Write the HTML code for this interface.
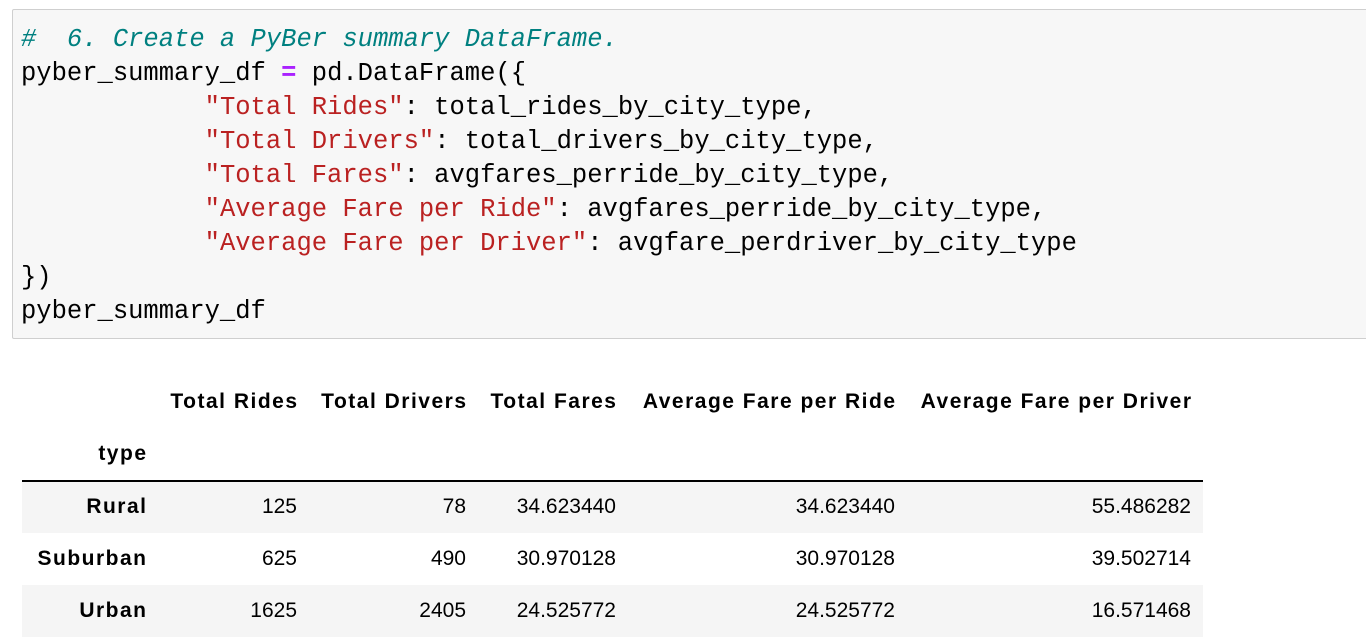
<!DOCTYPE html>
<html><head><meta charset="utf-8"><style>
body{margin:0;background:#fff;width:1366px;height:642px;overflow:hidden;position:relative}
.code{position:absolute;left:12px;top:9px;width:1360px;height:330px;background:#f7f7f7;border:1px solid #cfcfcf;border-radius:2px;box-sizing:border-box}
pre{margin:0;position:absolute;left:21px;top:23px;font-family:"Liberation Mono",monospace;font-size:25.5px;line-height:34px;color:#000}
.c{color:#008080;font-style:italic}.s{color:#ba2121}.o{color:#aa22ff;font-weight:bold}
.t{position:absolute;font-family:"Liberation Sans",sans-serif;font-size:21px;text-align:right;line-height:52px;height:52px;white-space:nowrap}
.b{font-weight:bold;letter-spacing:1.5px;margin-right:-1.5px}
.row{position:absolute;left:22px;width:1181px;height:52px}
</style></head><body>
<div class="code"></div>
<pre><span class="c">#  6. Create a PyBer summary DataFrame.</span>
pyber_summary_df <span class="o">=</span> pd.DataFrame({
            <span class="s">"Total Rides"</span>: total_rides_by_city_type,
            <span class="s">"Total Drivers"</span>: total_drivers_by_city_type,
            <span class="s">"Total Fares"</span>: avgfares_perride_by_city_type,
            <span class="s">"Average Fare per Ride"</span>: avgfares_perride_by_city_type,
            <span class="s">"Average Fare per Driver"</span>: avgfare_perdriver_by_city_type
})
pyber_summary_df</pre>
<div class="row" style="top:481px;background:#f5f5f5"></div>
<div class="row" style="top:585px;background:#f5f5f5"></div>
<div style="position:absolute;left:22px;top:480px;width:1181px;height:2px;background:#000"></div>
<div class="t b" style="right:1069px;top:376px">Total Rides</div>
<div class="t b" style="right:900px;top:376px">Total Drivers</div>
<div class="t b" style="right:750px;top:376px">Total Fares</div>
<div class="t b" style="right:471px;top:376px">Average Fare per Ride</div>
<div class="t b" style="right:175px;top:376px">Average Fare per Driver</div>
<div class="t b" style="right:1220px;top:428px">type</div>

<div class="t b" style="right:1220px;top:481px">Rural</div>
<div class="t" style="right:1069px;top:481px">125</div>
<div class="t" style="right:900px;top:481px">78</div>
<div class="t" style="right:750px;top:481px">34.623440</div>
<div class="t" style="right:471px;top:481px">34.623440</div>
<div class="t" style="right:175px;top:481px">55.486282</div>

<div class="t b" style="right:1220px;top:533px">Suburban</div>
<div class="t" style="right:1069px;top:533px">625</div>
<div class="t" style="right:900px;top:533px">490</div>
<div class="t" style="right:750px;top:533px">30.970128</div>
<div class="t" style="right:471px;top:533px">30.970128</div>
<div class="t" style="right:175px;top:533px">39.502714</div>

<div class="t b" style="right:1220px;top:585px">Urban</div>
<div class="t" style="right:1069px;top:585px">1625</div>
<div class="t" style="right:900px;top:585px">2405</div>
<div class="t" style="right:750px;top:585px">24.525772</div>
<div class="t" style="right:471px;top:585px">24.525772</div>
<div class="t" style="right:175px;top:585px">16.571468</div>
</body></html>
